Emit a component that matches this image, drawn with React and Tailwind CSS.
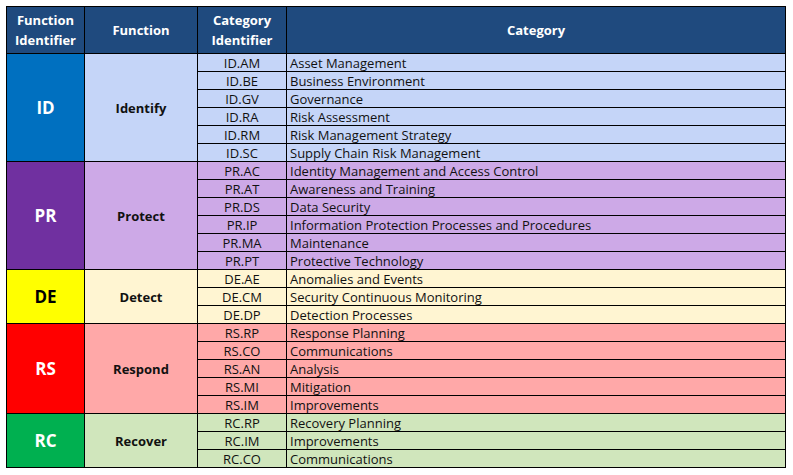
import React from "react";

const groups = [
  {
    id: "ID",
    name: "Identify",
    dark: "bg-[#0070c0] text-white",
    light: "bg-[#c5d5f8]",
    rows: [
      ["ID.AM", "Asset Management"],
      ["ID.BE", "Business Environment"],
      ["ID.GV", "Governance"],
      ["ID.RA", "Risk Assessment"],
      ["ID.RM", "Risk Management Strategy"],
      ["ID.SC", "Supply Chain Risk Management"],
    ],
  },
  {
    id: "PR",
    name: "Protect",
    dark: "bg-[#7030a0] text-white",
    light: "bg-[#cda9e7]",
    rows: [
      ["PR.AC", "Identity Management and Access Control"],
      ["PR.AT", "Awareness and Training"],
      ["PR.DS", "Data Security"],
      ["PR.IP", "Information Protection Processes and Procedures"],
      ["PR.MA", "Maintenance"],
      ["PR.PT", "Protective Technology"],
    ],
  },
  {
    id: "DE",
    name: "Detect",
    dark: "bg-[#ffff00] text-black",
    light: "bg-[#fff5d2]",
    rows: [
      ["DE.AE", "Anomalies and Events"],
      ["DE.CM", "Security Continuous Monitoring"],
      ["DE.DP", "Detection Processes"],
    ],
  },
  {
    id: "RS",
    name: "Respond",
    dark: "bg-[#ff0000] text-white",
    light: "bg-[#ffa8a8]",
    rows: [
      ["RS.RP", "Response Planning"],
      ["RS.CO", "Communications"],
      ["RS.AN", "Analysis"],
      ["RS.MI", "Mitigation"],
      ["RS.IM", "Improvements"],
    ],
  },
  {
    id: "RC",
    name: "Recover",
    dark: "bg-[#00b050] text-white",
    light: "bg-[#d0e6bc]",
    rows: [
      ["RC.RP", "Recovery Planning"],
      ["RC.IM", "Improvements"],
      ["RC.CO", "Communications"],
    ],
  },
];

const App = () => {
  return (
    <div className="w-[793px] h-[475px] bg-white pt-[6px] pl-[6px] font-['Open_Sans',sans-serif] text-[13px] text-[#111]">
      <table className="w-[780px] table-fixed border-collapse border border-black">
        <colgroup>
          <col className="w-[78px]" />
          <col className="w-[113px]" />
          <col className="w-[89px]" />
          <col />
        </colgroup>
        <thead>
          {/* header row */}
          <tr className="h-[47px] bg-[#1f4a7e] text-white font-bold leading-[20px]">
            <th className="border border-black font-bold">
              Function
              <br />
              Identifier
            </th>
            <th className="border border-black font-bold">Function</th>
            <th className="border border-black font-bold">
              Category
              <br />
              Identifier
            </th>
            <th className="border border-black font-bold">Category</th>
          </tr>
        </thead>
        <tbody>
          {groups.map((g) =>
            g.rows.map(([code, label], i) => (
              <tr key={code} className={`h-[18px] leading-[16px] ${g.light}`}>
                {i === 0 && (
                  <>
                    <td rowSpan={g.rows.length} className={`border border-black text-center text-[17px] font-bold ${g.dark}`}>
                      {g.id}
                    </td>
                    <td rowSpan={g.rows.length} className="border border-black text-center font-bold">
                      {g.name}
                    </td>
                  </>
                )}
                <td className="border border-black text-center p-0 pt-px">{code}</td>
                <td className="border border-black px-[3px] pt-px pb-0">{label}</td>
              </tr>
            ))
          )}
        </tbody>
      </table>
    </div>
  );
};

export default App;
